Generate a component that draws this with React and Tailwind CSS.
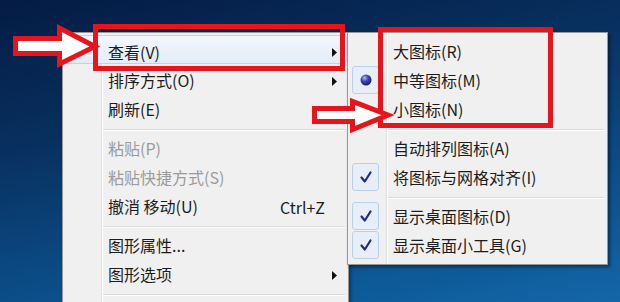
import React from 'react';

const font = "font-['Noto_Sans_CJK_SC','Microsoft_YaHei',sans-serif]";

function SubArrow() {
  return (
    <svg width="5" height="9" viewBox="0 0 5 9" className="shrink-0">
      <path d="M0 0 L5 4.5 L0 9 Z" fill="#111" />
    </svg>
  );
}

function CheckBox() {
  return (
    <div className="w-[27px] h-[28px] rounded-[3px] border border-[#b9d0ec] bg-[#e8eef8] flex items-center justify-center">
      <svg width="16" height="16" viewBox="0 0 16 16">
        <path d="M3.5 8.5 L6.8 12.5 L12.5 3.5" fill="none" stroke="#1c2a8c" strokeWidth="2.2" strokeLinejoin="round" strokeLinecap="round" />
      </svg>
    </div>
  );
}

function RadioBox() {
  return (
    <div className="w-[27px] h-[28px] rounded-[3px] border border-[#b9d0ec] bg-[#e8eef8] flex items-center justify-center">
      <svg width="12" height="12" viewBox="0 0 12 12">
        <defs>
          <radialGradient id="dot" cx="0.38" cy="0.32" r="0.7">
            <stop offset="0" stopColor="#b6bcf0" />
            <stop offset="0.45" stopColor="#3f48b0" />
            <stop offset="1" stopColor="#161c66" />
          </radialGradient>
        </defs>
        <circle cx="6" cy="6" r="5.5" fill="url(#dot)" />
      </svg>
    </div>
  );
}

function Row({ label, icon, arrow, shortcut, disabled, active }) {
  return (
    <div
      className={`flex items-start h-[29px] ${
        active
          ? 'mx-[1px] rounded-[3px] border border-[#b8d4f2] bg-[linear-gradient(#f3f7fc,#e2ecf8)]'
          : 'mx-[2px]'
      }`}
    >
      <div className="w-[43px] shrink-0 pl-[2px] pt-[2px]">{icon}</div>
      <span className={`pt-[5px] leading-[23px] text-[16px] whitespace-nowrap ${disabled ? 'text-[#9b9b9b]' : 'text-[#1c1c1c]'}`}>
        {label}
      </span>
      <div className="ml-auto flex items-center h-full pt-[6px] pr-[9px]">
        {shortcut && <span className="text-[16px] text-[#1c1c1c] mr-[12px] leading-[23px]">{shortcut}</span>}
        {arrow && <SubArrow />}
      </div>
    </div>
  );
}

function Sep() {
  return (
    <div className="h-[10px] pt-[7px] ml-[40px] mr-[3px]">
      <div className="h-px bg-[#dcdcdc]" />
      <div className="h-px bg-white" />
    </div>
  );
}

function Menu({ className, children }) {
  return (
    <div className={`absolute border border-[#979797] bg-[#f0f0f0] pt-[2px] ${font} ${className}`}>
      <div className="absolute left-[38px] top-0 bottom-0 w-px bg-[#e0e0e0]" />
      <div className="absolute left-[39px] top-0 bottom-0 w-px bg-white" />
      <div className="relative">{children}</div>
    </div>
  );
}

export default function App() {
  return (
    <div className="relative w-[620px] h-[302px] overflow-hidden bg-[linear-gradient(168deg,#041b44_0%,#08305f_35%,#0b4a84_65%,#0e5a98_85%,#1467a8_100%)]">
      {/* main context menu */}
      <Menu className="left-[62px] top-[32px] w-[287px] h-[290px] shadow-[2px_2px_3px_rgba(0,0,0,0.35)]">
        <Row label="查看(V)" arrow active />
        <Row label="排序方式(O)" arrow />
        <Row label="刷新(E)" />
        <Sep />
        <Row label="粘贴(P)" disabled />
        <Row label="粘贴快捷方式(S)" disabled />
        <Row label="撤消 移动(U)" shortcut="Ctrl+Z" />
        <Sep />
        <Row label="图形属性..." />
        <Row label="图形选项" arrow />
        <Sep />
      </Menu>

      {/* view submenu */}
      <Menu className="left-[347px] top-[32px] w-[261px] h-[233px] shadow-[2px_2px_3px_rgba(0,0,0,0.45)]">
        <Row label="大图标(R)" />
        <Row label="中等图标(M)" icon={<RadioBox />} />
        <Row label="小图标(N)" />
        <Sep />
        <Row label="自动排列图标(A)" />
        <Row label="将图标与网格对齐(I)" icon={<CheckBox />} />
        <Sep />
        <Row label="显示桌面图标(D)" icon={<CheckBox />} />
        <Row label="显示桌面小工具(G)" icon={<CheckBox />} />
      </Menu>

      {/* red annotation boxes */}
      <div className="absolute left-[93px] top-[24px] w-[252px] h-[47px] border-[5px] border-[#e8141c]" />
      <div className="absolute left-[378px] top-[27px] w-[175px] h-[101px] border-[5px] border-[#e8141c]" />

      {/* annotation arrows */}
      <svg className="absolute inset-0 pointer-events-none" width="620" height="302" viewBox="0 0 620 302">
        <polygon
          points="15.5,38.5 59.5,38.5 59.5,28 95,46.5 59.5,64 59.5,53.5 15.5,53.5"
          fill="#fff"
          stroke="#e8141c"
          strokeWidth="5"
          strokeLinejoin="miter"
        />
        <polygon
          points="314.5,108.5 352.5,108.5 352.5,101.5 388,115 352.5,129.5 352.5,121.5 314.5,121.5"
          fill="#fff"
          stroke="#e8141c"
          strokeWidth="5"
          strokeLinejoin="miter"
        />
      </svg>
    </div>
  );
}
